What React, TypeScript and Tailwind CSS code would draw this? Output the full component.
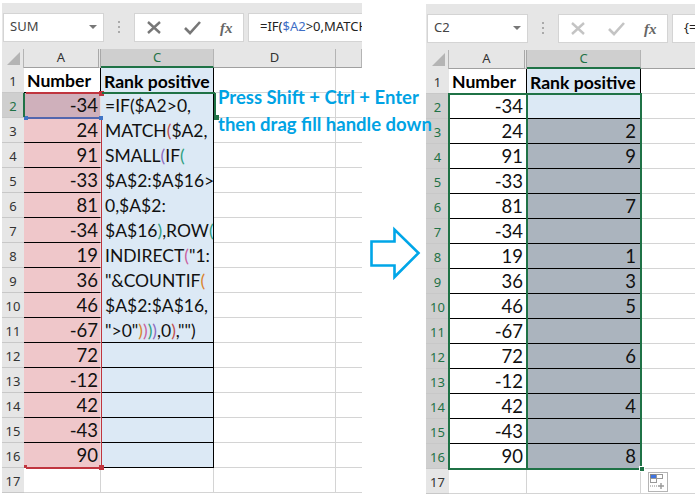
import React from "react";

const FONT = { fontFamily: "Lato, 'Open Sans', sans-serif" };

type Seg = [string, string?];
const P = (c: string, s: string): Seg => [s, c];

const leftFormula: Seg[][] = [
  [["=IF($A2>0,"]],
  [["MATCH"], P("#c0504d", "("), ["$A2,"]],
  [["SMALL"], P("#8e6bbf", "("), ["IF"], P("#2e9e7e", "(")],
  [["$A$2:$A$16>"]],
  [["0,$A$2:"]],
  [["$A$16"], P("#2e9e7e", ")"), [",ROW"], P("#2e9e7e", "(")],
  [["INDIRECT"], P("#c9609f", "("), ['"1:']],
  [['"&COUNTIF'], P("#d9822b", "(")],
  [["$A$2:$A$16,"]],
  [['">0"'], P("#d9822b", ")"), P("#c9609f", ")"), P("#2e9e7e", ")"), P("#8e6bbf", ")"), [",0"], P("#c0504d", ")"), [',""'], [")"]],
];

const numbers = ["-34", "24", "91", "-33", "81", "-34", "19", "36", "46", "-67", "72", "-12", "42", "-43", "90"];
const ranks = ["", "2", "9", "", "7", "", "1", "3", "5", "", "6", "", "4", "", "8"];

function NameBox({ label }: { label: string }) {
  return (
    <div className="flex h-[29px] w-[101px] items-center justify-between border border-[#d4d4d4] bg-white pl-[6px] pr-[6px] text-[13px] text-[#444]">
      <span style={{ fontFamily: "'Noto Sans', sans-serif" }}>{label}</span>
      <span className="h-0 w-0 border-x-[4px] border-t-[4px] border-x-transparent border-t-[#777]" />
    </div>
  );
}

function Dots() {
  return (
    <div className="flex flex-col gap-[3px]">
      <span className="size-[2px] bg-[#aaa]" />
      <span className="size-[2px] bg-[#aaa]" />
      <span className="size-[2px] bg-[#aaa]" />
    </div>
  );
}

function FxButtons({ active }: { active: boolean }) {
  const c = active ? "#777" : "#c4c4c4";
  return (
    <div className="flex h-[29px] w-[110px] items-center border border-[#d4d4d4] bg-white">
      <svg width="108" height="27" viewBox="0 0 108 27" fill="none">
        <path d="M13 8 L25 19 M25 8 L13 19" stroke={c} strokeWidth="2.4" />
        <path d="M50 14 L55 19 L65 8" stroke={c} strokeWidth="2.6" />
        <text x="85" y="19" fontFamily="'Liberation Serif', serif" fontStyle="italic" fontSize="15" fontWeight="700" fill="#666">
          fx
        </text>
      </svg>
    </div>
  );
}

function ToolBar({ name, formula, active }: { name: string; formula: React.ReactNode; active: boolean }) {
  return (
    <div className="flex h-[46px] items-center bg-[#e6e6e6] pl-[1px] pt-[2px]">
      <NameBox label={name} />
      <div className="flex w-[30px] justify-center">
        <Dots />
      </div>
      <FxButtons active={active} />
      <div className="ml-[4px] flex h-[29px] min-w-0 flex-1 items-center overflow-hidden whitespace-nowrap border-y border-l border-[#d4d4d4] bg-white pl-[11px] text-[13px] text-[#222]" style={{ fontFamily: "'Noto Sans', sans-serif" }}>
        {formula}
      </div>
    </div>
  );
}

function ColHead({ w, label, active, hiddenNext }: { w: string; label: string; active?: boolean; hiddenNext?: boolean }) {
  return (
    <div className={`flex h-full items-center justify-center text-[13px] ${w} ${hiddenNext ? "border-r-[3px] border-double border-r-[#a8a8a8]" : "border-r border-[#b4b4b4]"} ${active ? "border-b-2 border-b-[#1f7246] bg-[#cfcfcf] text-[#1f7246]" : "border-b border-b-[#a0a0a0] bg-[#e6e6e6] text-[#333]"}`} style={{ fontFamily: "'Noto Sans', sans-serif" }}>
      {label}
    </div>
  );
}

function RowHead({ n, active, w }: { n: number; active?: boolean; w: string }) {
  return (
    <div className={`flex h-full shrink-0 items-center justify-center border-b border-b-[#c8c8c8] pt-[4px] text-[13px] ${w} ${active ? "bg-[#cfcfcf] text-[#1f7246]" : "bg-[#e6e6e6] text-[#333]"}`} style={{ fontFamily: "'Noto Sans', sans-serif" }}>
      {n}
    </div>
  );
}

function Corner({ w }: { w: string }) {
  return (
    <div className={`relative h-full shrink-0 border-r border-[#b4b4b4] bg-[#e6e6e6] ${w}`}>
      <span className="absolute bottom-[3px] right-[3px] h-0 w-0 border-b-[13px] border-l-[13px] border-b-[#b4b4b4] border-l-transparent" />
    </div>
  );
}

const CELL = "flex h-full shrink-0 items-center justify-end overflow-hidden whitespace-nowrap border-b border-black pt-[2px] text-[18.5px] text-[#111]";
const HEAD = "flex h-full items-center whitespace-nowrap border-black pl-[3px] pt-[3px] text-[17.6px] font-bold text-black";

function LeftSheet() {
  return (
    <div className="relative w-[360px] shrink-0 overflow-hidden">
      <div className="flex h-[19px] items-stretch">
        <Corner w="w-[22px]" />
        <ColHead w="w-[77px]" label="A" hiddenNext />
        <ColHead w="w-[113px]" label="C" active />
        <ColHead w="w-[122px]" label="D" />
        <ColHead w="w-[26px]" label="" />
      </div>
      <div className="flex h-[25px]">
        <RowHead n={1} w="w-[22px]" />
        <div className={`${HEAD} w-[77px] border-b border-r`}>Number</div>
        <div className={`${HEAD} w-[113px] border-r bg-[#dce9f5]`}>Rank positive</div>
        <div className="h-full w-[122px] border-b border-r border-[#d4d4d4]" />
        <div className="h-full w-[26px] border-b border-[#d4d4d4]" />
      </div>
      {numbers.map((v, i) => (
        <div key={i} className="flex h-[25px]">
          <RowHead n={i + 2} active={i === 0} w="w-[22px]" />
          <div className={`${CELL} w-[77px] border-r border-r-[#e9dfe0] pr-[2px] ${i === 0 ? "bg-[#cfb0bb]" : "bg-[#efc7ca]"}`}>{v}</div>
          <div className={`flex h-full w-[113px] shrink-0 items-center overflow-hidden whitespace-pre border-r border-black bg-[#dce9f5] pl-[4px] pt-[2px] text-[17.5px] text-[#111] ${i >= 9 ? "border-b border-b-black" : ""}`}>
            {i < 10
              ? leftFormula[i].map((s, k) => (
                  <span key={k} style={s[1] ? { color: s[1] } : undefined}>
                    {s[0]}
                  </span>
                ))
              : null}
          </div>
          <div className="h-full w-[122px] border-b border-r border-[#d4d4d4]" />
          <div className="h-full w-[26px] border-b border-[#d4d4d4]" />
        </div>
      ))}
      <div className="flex h-[25px]">
        <RowHead n={17} w="w-[22px]" />
        <div className="h-full w-[77px] border-b border-r border-[#d4d4d4]" />
        <div className="h-full w-[113px] border-b border-r border-[#d4d4d4]" />
        <div className="h-full w-[122px] border-b border-r border-[#d4d4d4]" />
        <div className="h-full w-[26px] border-b border-[#d4d4d4]" />
      </div>
      {/* reference range marks */}
      <span className="absolute left-[24px] top-[43px] h-[2px] w-[73px] bg-[#c0353f]" />
      <span className="absolute left-[24px] top-[418px] h-[2px] w-[73px] bg-[#c0353f]" />
      <span className="absolute left-[99px] top-[68px] h-[350px] w-[1px] bg-[#c0353f]" />
      <span className="absolute left-[97px] top-[42px] size-[5px] bg-[#c0353f]" />
      <span className="absolute left-[97px] top-[416px] size-[5px] bg-[#c0353f]" />
      <span className="absolute left-[22px] top-[416px] size-[3px] bg-[#c0353f]" />
      <span className="absolute left-[22px] top-[68px] h-[2px] w-[77px] bg-[#5266ae]" />
      <span className="absolute left-[97px] top-[67px] size-[4px] bg-[#3f74c6]" />
      <span className="absolute left-[22px] top-[67px] size-[4px] bg-[#3f74c6]" />
      <span className="absolute left-[21px] top-[44px] h-[24px] w-[2px] bg-[#1f7246]" />
      <span className="absolute left-[100px] top-[43px] h-[2px] w-[113px] bg-[#1f7246]" />
      <span className="absolute left-[212px] top-[44px] h-[25px] w-[2px] bg-[#1f7246]" />
      <span className="absolute left-[212px] top-[66px] size-[5px] bg-[#1f7246]" />
    </div>
  );
}

function RightSheet() {
  return (
    <div className="relative min-w-0 flex-1 overflow-hidden">
      <div className="flex h-[19px] items-stretch">
        <Corner w="w-[23px]" />
        <ColHead w="w-[78px]" label="A" hiddenNext />
        <ColHead w="w-[114px]" label="C" active />
        <div className="h-full flex-1 border-b border-[#a0a0a0] bg-[#e6e6e6]" />
      </div>
      <div className="flex h-[25px]">
        <RowHead n={1} w="w-[23px]" />
        <div className={`${HEAD} w-[78px] border-b border-r`}>Number</div>
        <div className={`${HEAD} w-[114px] border-r bg-[#dce9f5]`}>Rank positive</div>
        <div className="h-full flex-1 border-b border-[#d4d4d4]" />
      </div>
      {numbers.map((v, i) => (
        <div key={i} className="flex h-[25px]">
          <RowHead n={i + 2} active w="w-[23px]" />
          <div className={`${CELL} w-[78px] border-r border-r-black pr-[3px]`}>{v}</div>
          <div className={`${CELL} w-[114px] border-r border-r-white pr-[4px] ${i === 0 ? "bg-[#dce9f5]" : "bg-[#abb4be]"}`}>{ranks[i]}</div>
          <div className="h-full flex-1 border-b border-[#d4d4d4]" />
        </div>
      ))}
      <div className="flex h-[25px]">
        <RowHead n={17} w="w-[23px]" />
        <div className="h-full w-[78px] border-b border-r border-[#d4d4d4]" />
        <div className="h-full w-[114px] border-b border-r border-[#d4d4d4]" />
        <div className="h-full flex-1 border-b border-[#d4d4d4]" />
      </div>
      {/* selection */}
      <span className="absolute left-[22px] top-[44px] h-[375px] w-[2px] bg-[#1f7246]" />
      <span className="absolute left-[100px] top-[44px] h-[375px] w-[2px] bg-[#1f7246]" />
      <span className="absolute left-[214px] top-[44px] h-[375px] w-[2px] bg-[#1f7246]" />
      <span className="absolute left-[22px] top-[43px] h-[2px] w-[194px] bg-[#1f7246]" />
      <span className="absolute left-[22px] top-[418px] h-[2px] w-[194px] bg-[#1f7246]" />
      <span className="absolute left-[213px] top-[416px] size-[6px] border border-white bg-[#1f7246]" />
      <div className="absolute left-[222px] top-[422px] flex size-[20px] items-center justify-center border border-[#b4b4b4] bg-white">
        <svg width="16" height="16" viewBox="0 0 16 16" fill="none">
          <rect x="0.5" y="0.5" width="6" height="4" fill="#3f74e0" stroke="#888" strokeWidth="1" />
          <rect x="6.5" y="0.5" width="6" height="4" fill="white" stroke="#999" strokeWidth="1" />
          <rect x="0.5" y="4.5" width="6" height="4" fill="white" stroke="#999" strokeWidth="1" />
          <path d="M0 12 H7" stroke="#888" strokeWidth="1" strokeDasharray="1 1" />
          <path d="M11 9 V15 M8 12 H14" stroke="#999" strokeWidth="1.4" />
        </svg>
      </div>
    </div>
  );
}

export default function App() {
  return (
    <div className="relative h-[495px] w-[695px] overflow-hidden bg-white" style={FONT}>
      <div className="flex h-full pt-[3px]">
        <div className="ml-[2px] flex w-[360px] shrink-0 flex-col">
          <ToolBar
            name="SUM"
            active
            formula={
              <span>
                =IF(<span className="text-[#3f6fc6]">$A2</span>&gt;0,MATCH
              </span>
            }
          />
          <LeftSheet />
        </div>
        <div className="ml-[64px] flex min-w-0 flex-1 flex-col pt-[1px]">
          <ToolBar name="C2" active={false} formula={<span>{"{=IF"}</span>} />
          <RightSheet />
        </div>
      </div>

      <div className="absolute left-[218px] top-[84px] whitespace-nowrap text-[18.5px] font-bold leading-[27px] text-[#00a3e4]">
        <div>Press Shift + Ctrl + Enter</div>
        <div>then drag fill handle down</div>
      </div>

      <svg className="absolute left-[368px] top-[226px]" width="54" height="55" viewBox="0 0 54 55" fill="none">
        <path d="M3.5 15.5 H26.5 V3.5 L50.5 27 L26.5 51 V39.5 H3.5 Z" stroke="#00a6e8" strokeWidth="2.6" fill="white" />
      </svg>
    </div>
  );
}
